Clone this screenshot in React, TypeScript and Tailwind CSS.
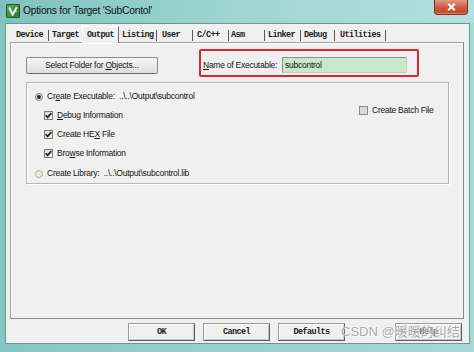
import React from "react";

function Check({ checked }: { checked: boolean }) {
  return checked ? (
    <div className="w-[9px] h-[9px] shrink-0 border border-[#7a7a7a] bg-gradient-to-br from-[#d9d9d9] to-[#fafafa] flex items-center justify-center">
      <svg width="7" height="7" viewBox="0 0 7 7">
        <path d="M0.7 3.3 L2.6 5.4 L6.3 1.1" stroke="#1c261c" strokeWidth="1.7" fill="none" />
      </svg>
    </div>
  ) : (
    <div className="w-[9px] h-[9px] shrink-0 border border-[#8a8a8a] bg-[#d3dfd1]" />
  );
}

function Radio({ on }: { on: boolean }) {
  return on ? (
    <div className="w-[8px] h-[8px] shrink-0 rounded-full border border-[#7e7e7e] bg-gradient-to-br from-[#d6d6d6] to-[#fbfbfb] flex items-center justify-center">
      <div className="w-[4px] h-[4px] rounded-full bg-[#262626]" />
    </div>
  ) : (
    <div className="w-[8px] h-[8px] shrink-0 rounded-full border border-[#a9b0a8] bg-[#e6eee4]" />
  );
}

const tabs: { label: string; w: string; pl: string; sep: boolean; sel?: boolean }[] = [
  { label: "Device", w: "w-[39px]", pl: "pl-[6px]", sep: true },
  { label: "Target", w: "w-[33px]", pl: "pl-[3px]", sep: false },
  { label: "Output", w: "w-[37px]", pl: "pl-[4px]", sep: true, sel: true },
  { label: "Listing", w: "w-[38px]", pl: "pl-[3px]", sep: true },
  { label: "User", w: "w-[36px]", pl: "pl-[5px]", sep: true },
  { label: "C/C++", w: "w-[36px]", pl: "pl-[4px]", sep: true },
  { label: "Asm", w: "w-[36px]", pl: "pl-[2px]", sep: true },
  { label: "Linker", w: "w-[36px]", pl: "pl-[3px]", sep: true },
  { label: "Debug", w: "w-[34px]", pl: "pl-[3px]", sep: true },
  { label: "Utilities", w: "w-[51px]", pl: "pl-[5px]", sep: true },
];

function DlgButton({ label, extra }: { label: string; extra?: string }) {
  return (
    <div
      className={`w-[67px] h-[18px] flex items-center justify-center border border-[#9a9a9a] border-r-[#5c5c5c] border-b-[#5c5c5c] bg-[#f0f0f0] shadow-[inset_1px_1px_0_#ffffff,inset_-1px_-1px_0_#c8c8c8] font-['Liberation_Mono',monospace] font-bold text-[8.5px] tracking-[-0.6px] text-[#202020] leading-none ${extra ?? ""}`}
    >
      {label}
    </div>
  );
}

export default function App() {
  const txt = "text-[8.5px] tracking-[-0.25px] leading-none text-[#151515]";
  return (
    <div className="relative w-[474px] h-[352px] overflow-hidden flex flex-col bg-gradient-to-r from-[#86c6c2] via-[#98d0cd] to-[#a6d8d6] font-['Liberation_Sans','Noto_Sans_CJK_SC',sans-serif]">
      {/* Title bar */}
      <div className="h-[23px] shrink-0 flex items-start pl-[6px] bg-gradient-to-r from-[#7fc2bd] via-[#a0d5d3] to-[#b2e0de]">
        <div className="mt-[4px] w-[14px] h-[14px] rounded-[1px] border border-[#1d5a22] bg-gradient-to-br from-[#56b05a] to-[#2d7a32] flex items-center justify-center">
          <svg width="10" height="10" viewBox="0 0 10 10">
            <path d="M1.2 1.5 L4.6 8.6 L8.8 1.2" stroke="#ffffff" strokeWidth="1.8" fill="none" />
            <path d="M6.2 5.2 L8.6 5.2" stroke="#ffffff" strokeWidth="1.1" />
          </svg>
        </div>
        <span className="ml-[3px] mt-[6px] text-[10.3px] tracking-[-0.25px] leading-none text-[#0c1414]">
          Options for Target 'SubContol'
        </span>
        <div className="ml-auto mr-[6px] w-[34px] h-[15px] rounded-b-[4px] border border-t-0 border-[#7e2a20] bg-gradient-to-b from-[#e39a86] via-[#cf5a45] to-[#c2402c] shadow-[inset_0_-1px_1px_#e8826c] flex items-center justify-center">
          <svg width="9" height="8" viewBox="0 0 9 8">
            <path d="M1.2 0.8 L7.8 7.2 M7.8 0.8 L1.2 7.2" stroke="#ffffff" strokeWidth="2" />
          </svg>
        </div>
      </div>

      {/* Client area */}
      <div className="ml-[5px] mr-[4px] mb-[8px] flex-1 flex flex-col border border-[#5f9c98] bg-[#f0f0f0]">
        {/* Tabs */}
        <div className="h-[18px] shrink-0 flex pl-[4px] font-['Liberation_Mono',monospace] font-bold text-[8.5px] tracking-[-0.6px] text-[#1c1c1c] leading-none">
          {tabs.map((t) =>
            t.sel ? (
              <div
                key={t.label}
                className={`${t.w} relative z-10 mt-[2px] h-[17px] -mb-px flex border-l border-t border-l-white border-t-white border-r border-r-[#6a6a6a] bg-[#f0f0f0]`}
              >
                <div className={`flex-1 ${t.pl} pt-[4px]`}>{t.label}</div>
              </div>
            ) : (
              <div key={t.label} className={`${t.w} flex`}>
                <div className={`flex-1 ${t.pl} pt-[7px]`}>{t.label}</div>
                {t.sep && <div className="mt-[6px] w-px h-[11px] bg-[#5a5a5a]" />}
              </div>
            )
          )}
        </div>

        {/* Tab page */}
        <div className="ml-[4px] w-[454px] h-[277px] shrink-0 flex flex-col border border-[#a3a3a3] border-r-[#8a8a8a] border-b-[#8a8a8a] shadow-[inset_1px_1px_0_#ffffff] bg-[#f0f0f0]">
          <div className="flex items-start pl-[15px] pt-[6px]">
            <div className="mt-[8px] w-[132px] h-[17px] flex items-center justify-center rounded-[2px] border border-[#8b8b8b] border-b-[#6b6b6b] bg-gradient-to-b from-[#f6f6f6] to-[#dedede]">
              <span className={txt}>
                Select Folder for <span className="underline">O</span>bjects...
              </span>
            </div>
            <div className="ml-[41px] w-[220px] h-[28px] rounded-[2px] border-2 border-[#e2262a] flex items-center pl-[2px] pt-[4px]">
              <div className={`w-[79px] ${txt}`}>
                <span className="underline">N</span>ame of Executable:
              </div>
              <div className={`w-[125px] h-[16px] flex items-center pl-[2px] border border-[#8e8e8e] border-r-[#c9c9c9] border-b-[#c9c9c9] bg-[#c9e7ca] ${txt}`}>
                subcontrol
              </div>
            </div>
          </div>

          {/* Group box */}
          <div className="ml-[15px] mt-[5px] w-[423px] h-[102px] flex border border-[#b5b5b5] shadow-[inset_1px_1px_0_#ffffff,1px_1px_0_#ffffff]">
            <div className="w-[332px] flex flex-col pt-[4px]">
              <div className="h-[19px] flex items-center pl-[8px] gap-[4px]">
                <Radio on />
                <span className={txt}>
                  Cr<span className="underline">e</span>ate Executable:&nbsp;&nbsp;..\..\Output\subcontrol
                </span>
              </div>
              <div className="h-[19px] flex items-center pl-[17px] gap-[4px]">
                <Check checked />
                <span className={txt}>
                  <span className="underline">D</span>ebug Information
                </span>
              </div>
              <div className="h-[19px] flex items-center pl-[17px] gap-[4px]">
                <Check checked />
                <span className={txt}>
                  Create HE<span className="underline">X</span> File
                </span>
              </div>
              <div className="h-[19px] flex items-center pl-[17px] gap-[4px]">
                <Check checked />
                <span className={txt}>
                  Bro<span className="underline">w</span>se Information
                </span>
              </div>
              <div className="mt-[1px] h-[19px] flex items-center pl-[8px] gap-[4px]">
                <Radio on={false} />
                <span className={txt}>Create Library:&nbsp;&nbsp;..\..\Output\subcontrol.lib</span>
              </div>
            </div>
            <div className="flex-1 pt-[18px]">
              <div className="h-[19px] flex items-center gap-[4px]">
                <Check checked={false} />
                <span className={txt}>Create Batch File</span>
              </div>
            </div>
          </div>
        </div>

        {/* Buttons */}
        <div className="mt-[4px] flex pl-[122px] gap-[8px]">
          <DlgButton label="OK" />
          <DlgButton label="Cancel" />
          <DlgButton label="Defaults" />
          <DlgButton label="Help" extra="ml-[42px]" />
        </div>
      </div>

      {/* Watermark overlay */}
      <div className="absolute left-[341px] top-[325px] text-[13px] leading-none text-[#9c9c9c]/90 [text-shadow:0_0_2px_#ffffff,0_0_1px_#ffffff] whitespace-nowrap">
        CSDN @暖暖的纠结
      </div>
    </div>
  );
}
